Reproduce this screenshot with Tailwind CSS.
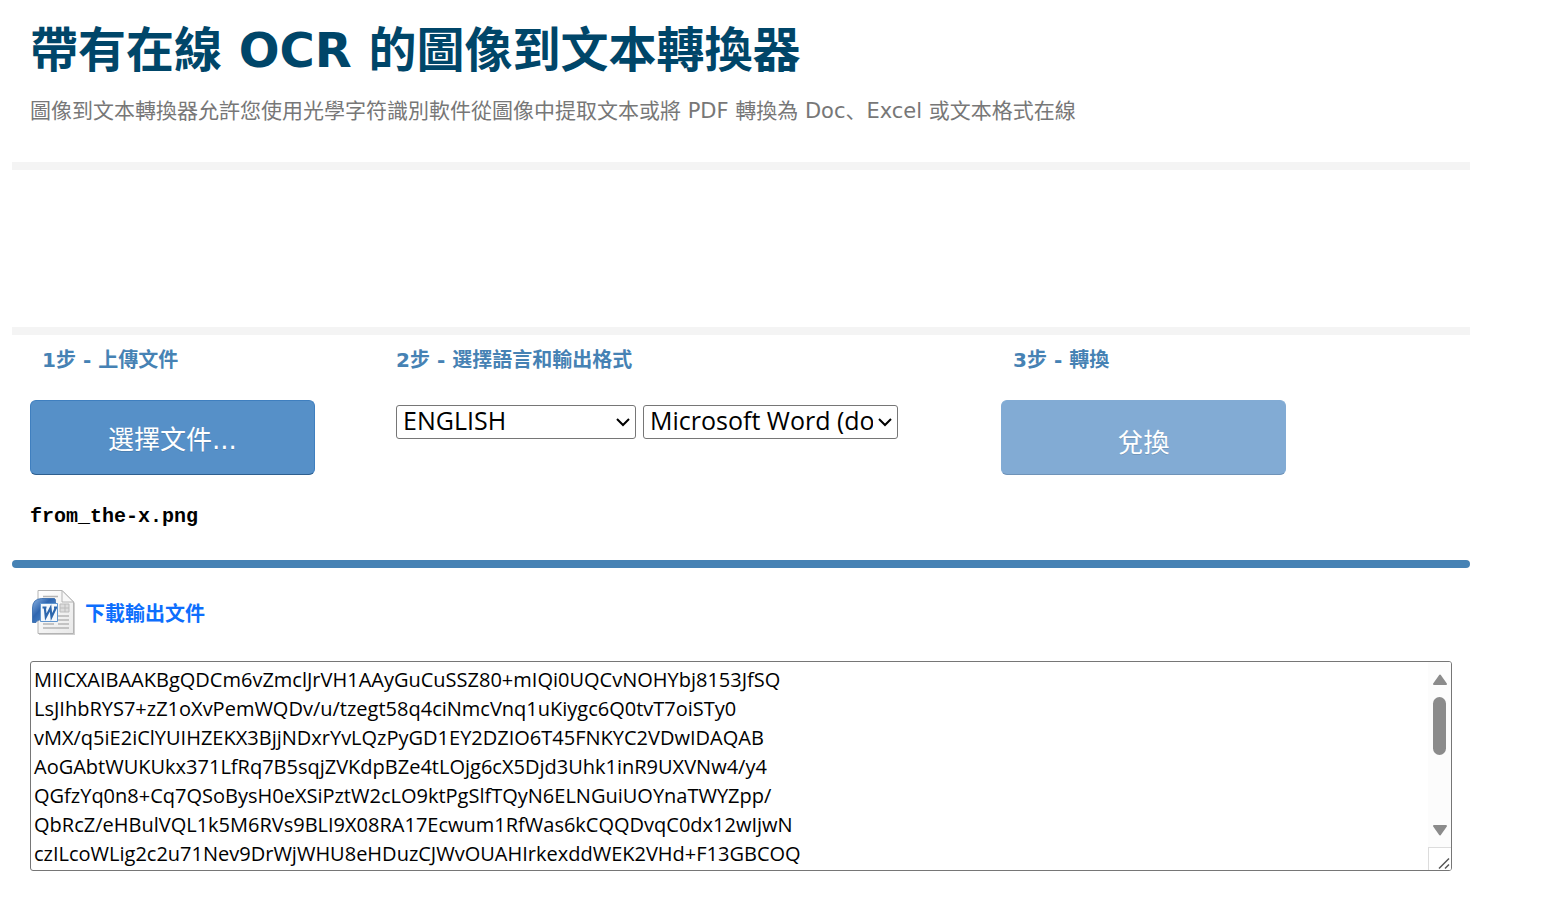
<!DOCTYPE html>
<html lang="zh">
<head>
  <meta charset="UTF-8">
  <meta name="viewport" content="width=device-width, initial-scale=1.0">
  <title>帶有在線 OCR 的圖像到文本轉換器</title>
  <script src="https://cdn.jsdelivr.net/npm/@tailwindcss/browser@4"></script>
</head>
<body class="bg-white font-['DejaVu_Sans','Noto_Sans_CJK_SC',sans-serif]">
  <div class="ml-3 mr-[72px]">
    <header class="px-[18px] pt-5 pb-[35px]">
      <h1 class="text-5xl leading-[60px] font-bold text-[#004669]">帶有在線 OCR 的圖像到文本轉換器</h1>
      <p class="mt-[15px] text-[21px] leading-8 text-[#777]">圖像到文本轉換器允許您使用光學字符識別軟件從圖像中提取文本或將 PDF 轉換為 Doc、Excel 或文本格式在線</p>
    </header>

    <!-- Ad slot -->
    <div class="h-[173px] border-y-8 border-[#f4f4f4]"></div>

    <form>
      <div class="grid grid-cols-[366fr_605fr_451fr] px-[18px] pt-[9px]">
        <section>
          <h2 class="pl-3 text-xl leading-8 font-bold text-[#4682b4]">1步 - 上傳文件</h2>
          <button type="button" class="mt-6 flex h-[75px] w-[285px] items-center justify-center rounded-md border border-[#3f7fbf] border-b-[#2f5f8f] bg-[#5690c8] pt-[6px] text-[26px] text-white text-shadow-2xs">選擇文件...</button>
          <p class="mt-[26px] font-['Liberation_Mono',monospace] text-xl leading-8 font-bold text-black">from_the-x.png</p>
        </section>

        <section>
          <h2 class="text-xl leading-8 font-bold text-[#4682b4]">2步 - 選擇語言和輸出格式</h2>
          <div class="mt-[29px] flex gap-[7px]">
            <div class="relative">
              <select aria-label="語言" class="block h-[34px] w-60 appearance-none rounded-[3px] border border-[#767676] bg-white pr-6 pb-1 pl-[6px] font-['Open_Sans',sans-serif] text-[25px] leading-7 text-black">
                <option>ENGLISH</option>
              </select>
              <svg class="pointer-events-none absolute top-3 right-[6px] h-[10px] w-[14px]" viewBox="0 0 14 10" aria-hidden="true"><path d="M1 2l6 6 6-6" fill="none" stroke="#000" stroke-width="2"/></svg>
            </div>
            <div class="relative">
              <select aria-label="輸出格式" class="block h-[34px] w-[255px] appearance-none rounded-[3px] border border-[#767676] bg-white pr-6 pb-1 pl-[6px] font-['Open_Sans',sans-serif] text-[25px] leading-7 text-black">
                <option>Microsoft Word (docx)</option>
              </select>
              <svg class="pointer-events-none absolute top-3 right-[6px] h-[10px] w-[14px]" viewBox="0 0 14 10" aria-hidden="true"><path d="M1 2l6 6 6-6" fill="none" stroke="#000" stroke-width="2"/></svg>
            </div>
          </div>
        </section>

        <section>
          <h2 class="pl-3 text-xl leading-8 font-bold text-[#4682b4]">3步 - 轉換</h2>
          <button type="submit" class="mt-6 flex h-[75px] w-[285px] items-center justify-center rounded-md border border-[#82abd4] border-b-[#6f93b8] bg-[#82abd4] pt-3 text-[26px] text-white text-shadow-2xs">兌換</button>
        </section>
      </div>

      <div class="mt-[27px] h-2 rounded-full bg-[#4682b4]"></div>

      <div class="px-[18px] pt-5">
        <a href="#" class="flex w-fit items-center gap-[7px] text-xl leading-8 font-bold text-[#0d6efd]">
          <svg class="h-12 w-12" viewBox="0 0 48 48" aria-hidden="true">
            <defs>
              <linearGradient id="page" x1="0" y1="0" x2="1" y2="1">
                <stop offset="0" stop-color="#fff"/>
                <stop offset="1" stop-color="#e9e9e9"/>
              </linearGradient>
              <linearGradient id="tile" x1="0" y1="0" x2="1" y2="1">
                <stop offset="0" stop-color="#8db4e2"/>
                <stop offset=".4" stop-color="#2f66b0"/>
                <stop offset="1" stop-color="#5b9bdc"/>
              </linearGradient>
            </defs>
            <path d="M9 4h25l11 11v32H9z" fill="#cfcfcf"/>
            <path d="M8 2.500h24L43.500 14v31.500H8z" fill="url(#page)" stroke="#b4b4b4"/>
            <path d="M32 2.500V14h11.500z" fill="#f8f8f8" stroke="#b4b4b4"/>
            <path d="M13 8.500h15M28 28h11M28 32h11M28 36h11M13 36h11M13 40h26" stroke="#b5b5b5" stroke-width="1.600" fill="none"/>
            <path d="M30 16h9v8h-9zM30 20h9M35 16v8" fill="#ddd" stroke="#bbb"/>
            <path d="M2.500 34.500V20q0-9 9-9.500h13q1 0 1 3v3H12v15q-5 0-6 3z" fill="url(#tile)" stroke="#2f65a8" stroke-width=".8"/>
            <path d="M10.500 15.500h17v18h-17z" fill="#f4f8fc" stroke="#5f95cf"/>
            <path d="M12.500 19.500h4M14.800 19.500l1 9.500 4.700-9 1 9 4.500-9.500M24 19.500h3" fill="none" stroke="#2d67ad" stroke-width="2.200"/>
          </svg>
          <span class="pt-1">下載輸出文件</span>
        </a>

        <div class="mt-[25px] flex h-[210px] overflow-hidden rounded-[3px] border border-[#767676] bg-white">
          <textarea aria-label="輸出文本" class="flex-1 resize-none overflow-hidden px-[3px] pt-[3px] font-['Open_Sans',sans-serif] text-xl leading-[29px] text-black outline-none">MIICXAIBAAKBgQDCm6vZmclJrVH1AAyGuCuSSZ80+mIQi0UQCvNOHYbj8153JfSQ
LsJIhbRYS7+zZ1oXvPemWQDv/u/tzegt58q4ciNmcVnq1uKiygc6Q0tvT7oiSTy0
vMX/q5iE2iClYUIHZEKX3BjjNDxrYvLQzPyGD1EY2DZIO6T45FNKYC2VDwIDAQAB
AoGAbtWUKUkx371LfRq7B5sqjZVKdpBZe4tLOjg6cX5Djd3Uhk1inR9UXVNw4/y4
QGfzYq0n8+Cq7QSoBysH0eXSiPztW2cLO9ktPgSlfTQyN6ELNGuiUOYnaTWYZpp/
QbRcZ/eHBulVQL1k5M6RVs9BLI9X08RA17Ecwum1RfWas6kCQQDvqC0dx12wIjwN
czILcoWLig2c2u71Nev9DrWjWHU8eHDuzCJWvOUAHIrkexddWEK2VHd+F13GBCOQ</textarea>
          <div class="flex w-[23px] flex-col bg-[#fcfcfc]">
            <div class="flex flex-1 flex-col items-center pt-3 pb-[11px]">
              <svg class="h-3 w-4" viewBox="0 0 16 12" aria-hidden="true"><path d="M8 1.500L14 10H2z" fill="#8b8b8b" stroke="#8b8b8b" stroke-width="2" stroke-linejoin="round"/></svg>
              <div class="mt-[11px] h-[58px] w-[13px] rounded-full bg-[#8b8b8b]"></div>
              <svg class="mt-auto h-3 w-4" viewBox="0 0 16 12" aria-hidden="true"><path d="M8 10.500L14 2H2z" fill="#8b8b8b" stroke="#8b8b8b" stroke-width="2" stroke-linejoin="round"/></svg>
            </div>
            <svg class="h-[23px] w-[23px] border-t border-l border-[#dcdcdc] bg-white" viewBox="0 0 22 22" aria-hidden="true"><path d="M10 20.500l10-10M16 20.500l4-4" stroke="#555" stroke-width="1.500" fill="none"/></svg>
          </div>
        </div>
      </div>
    </form>
  </div>
</body>
</html>
